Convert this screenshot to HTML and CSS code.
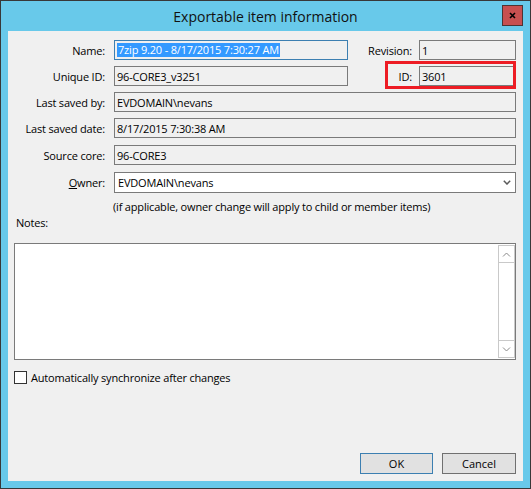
FILE: index.html
```html
<!DOCTYPE html>
<html lang="en">
<head>
    <meta charset="UTF-8">
    <title>Exportable item information</title>
    <link rel="stylesheet" href="styles.css">
</head>
<body>

    <div class="window">
        <div class="titlebar">
            <span class="title">Exportable item information</span>
            <div class="close">
                <svg width="7" height="7" viewBox="0 0 7 7">
                    <path d="M1 1 L6 6 M6 1 L1 6" stroke="#000" stroke-width="1.6" fill="none"/>
                </svg>
            </div>
        </div>

        <div class="client">
            <div class="row">
                <label class="lbl">Name:</label>
                <div class="box focused w-name"><span class="sel">7zip 9.20 - 8/17/2015 7:30:27 AM</span></div>
                <label class="lbl-r">Revision:</label>
                <div class="box w-small">1</div>
            </div>

            <div class="row">
                <label class="lbl">Unique ID:</label>
                <div class="box w-name">96-CORE3_v3251</div>
                <label class="lbl-r">ID:</label>
                <div class="box w-small">3601</div>
                <div class="highlight"></div>
            </div>

            <div class="row">
                <label class="lbl">Last saved by:</label>
                <div class="box wide">EVDOMAIN\nevans</div>
            </div>

            <div class="row">
                <label class="lbl">Last saved date:</label>
                <div class="box wide">8/17/2015 7:30:38 AM</div>
            </div>

            <div class="row gap7">
                <label class="lbl">Source core:</label>
                <div class="box wide">96-CORE3</div>
            </div>

            <div class="row gap7 owner-row">
                <label class="lbl"><u>O</u>wner:</label>
                <div class="box combo wide">
                    <span>EVDOMAIN\nevans</span>
                    <svg width="8" height="5" viewBox="0 0 8 5">
                        <path d="M0.8 0.8 L4 4 L7.2 0.8" stroke="#5a5a5a" stroke-width="1.5" fill="none"/>
                    </svg>
                </div>
            </div>

            <p class="hint">(if applicable, owner change will apply to child or member items)</p>

            <p class="notes-label">Notes:</p>

            <div class="notes">
                <div class="notes-text"></div>
                <div class="scrollbar">
                    <div class="sb-btn">
                        <svg width="9" height="5" viewBox="0 0 9 5">
                            <path d="M1 4.5 L4.5 1 L8 4.5" stroke="#8a8a8a" stroke-width="1" fill="none"/>
                        </svg>
                    </div>
                    <div class="sb-track"></div>
                    <div class="sb-btn">
                        <svg width="9" height="5" viewBox="0 0 9 5">
                            <path d="M1 0.5 L4.5 4 L8 0.5" stroke="#8a8a8a" stroke-width="1" fill="none"/>
                        </svg>
                    </div>
                </div>
            </div>

            <div class="check-row">
                <div class="checkbox"></div>
                <span>Automatically synchronize after changes</span>
            </div>

            <div class="buttons">
                <button class="btn default">OK</button>
                <button class="btn">Cancel</button>
            </div>
        </div>
    </div>

</body>
</html>
```

FILE: styles.css
```css
html, body {
    margin: 0;
    padding: 0;
    background-color: #fff;
    overflow: hidden;
}

.window {
    width: 531px;
    height: 489px;
    box-sizing: border-box;
    border: 1px solid #383838;
    background-color: #68c9ea;
    padding: 0 7px 7px 7px;
    display: flex;
    flex-direction: column;
    font-family: "Open Sans", "Noto Sans", sans-serif;
    font-size: 11px;
    letter-spacing: -0.18px;
    color: #000;
}

.titlebar {
    height: 30px;
    display: flex;
    align-items: center;
    justify-content: center;
    position: relative;
}

.title {
    font-family: "Open Sans", sans-serif;
    font-size: 14px;
    letter-spacing: 0;
    color: #111;
    margin-top: 1px;
}

.close {
    position: absolute;
    right: 0;
    top: 4px;
    width: 19px;
    height: 19px;
    background-color: #c75050;
    border: 1px solid #4d3433;
    display: flex;
    align-items: center;
    justify-content: center;
}

.client {
    flex: 1;
    background-color: #f0f0f0;
    padding: 9px 7px 7px 6px;
    display: flex;
    flex-direction: column;
    position: relative;
}

.row {
    display: flex;
    align-items: center;
    height: 20px;
    margin-bottom: 6px;
    position: relative;
}

.row.gap7 {
    margin-top: 1px;
}

.owner-row {
    height: 21px;
    margin-bottom: 0;
}

.lbl {
    width: 91px;
    margin-right: 9px;
    text-align: right;
    white-space: nowrap;
}

.lbl-r {
    flex: 1;
    text-align: right;
    margin-right: 7px;
}

.box {
    height: 100%;
    box-sizing: border-box;
    border: 1px solid #7a7a7a;
    background-color: #f0f0f0;
    padding: 0 2px;
    display: flex;
    align-items: center;
    white-space: nowrap;
    overflow: hidden;
}

.box.focused {
    border-color: #3c7fb1;
}

.sel {
    background-color: #3399ff;
    color: #fff;
    padding: 0 1px;
    line-height: 14px;
}

.w-name {
    width: 234px;
}

.w-small {
    width: 97px;
}

.wide {
    flex: 1;
}

.combo {
    background-color: #fff;
    justify-content: space-between;
    padding: 0 4px 0 3px;
}

.highlight {
    position: absolute;
    left: 371px;
    top: -5px;
    width: 131px;
    height: 28px;
    box-sizing: border-box;
    border: 3px solid #ed1c24;
}

.hint {
    margin: 6px 0 0 99px;
    line-height: 15px;
}

.notes-label {
    margin: 1px 0 0 2px;
    line-height: 15px;
}

.notes {
    margin-top: 13px;
    height: 117px;
    box-sizing: border-box;
    border: 1px solid #7a7a7a;
    background-color: #fff;
    display: flex;
}

.notes-text {
    flex: 1;
}

.scrollbar {
    width: 17px;
    margin: 1px 0;
    box-sizing: border-box;
    border: 1px solid #c9c9c9;
    display: flex;
    flex-direction: column;
}

.sb-btn {
    height: 16px;
    display: flex;
    align-items: center;
    justify-content: center;
}

.sb-btn:first-child {
    border-bottom: 1px solid #c9c9c9;
}

.sb-btn:last-child {
    border-top: 1px solid #c9c9c9;
}

.sb-track {
    flex: 1;
}

.check-row {
    margin-top: 11px;
    display: flex;
    align-items: center;
    height: 13px;
}

.checkbox {
    width: 13px;
    height: 13px;
    box-sizing: border-box;
    border: 1px solid #333;
    background-color: #fff;
    margin-right: 4px;
}

.buttons {
    margin-top: auto;
    display: flex;
    justify-content: flex-end;
    gap: 9px;
}

.btn {
    width: 73px;
    height: 21px;
    box-sizing: border-box;
    border: 1px solid #707070;
    background-color: #e1e1e1;
    font-family: "Open Sans", sans-serif;
    font-size: 11px;
    color: #000;
    padding: 0;
}

.btn + .btn {
    width: 74px;
}

.btn.default {
    border-color: #3c7fb1;
}
```
